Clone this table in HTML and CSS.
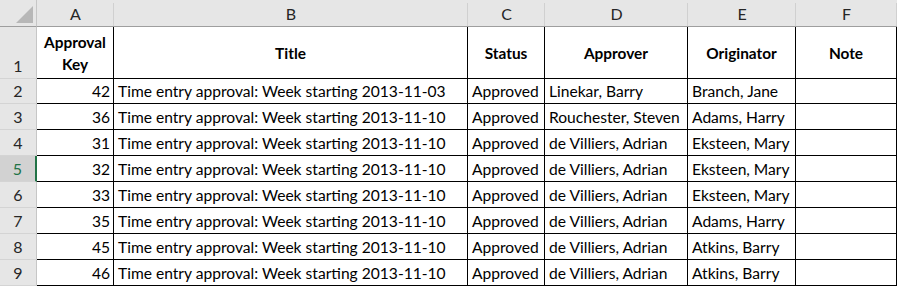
FILE: index.html
```html
<!DOCTYPE html>
<html>
<head>
<meta charset="utf-8">
<link rel="stylesheet" href="styles.css">
</head>
<body>
<div class="sheet">
  <div class="corner"><span class="tri"></span></div>
  <div class="colhead">A</div>
  <div class="colhead">B</div>
  <div class="colhead">C</div>
  <div class="colhead">D</div>
  <div class="colhead">E</div>
  <div class="colhead">F</div>

  <div class="rowhead">1</div>
  <div class="cell hdr">Approval<br>Key</div>
  <div class="cell hdr">Title</div>
  <div class="cell hdr">Status</div>
  <div class="cell hdr">Approver</div>
  <div class="cell hdr">Originator</div>
  <div class="cell hdr">Note</div>

  <div class="rowhead">2</div>
  <div class="cell num">42</div>
  <div class="cell">Time entry approval: Week starting 2013-11-03</div>
  <div class="cell">Approved</div>
  <div class="cell">Linekar, Barry</div>
  <div class="cell">Branch, Jane</div>
  <div class="cell"></div>

  <div class="rowhead">3</div>
  <div class="cell num">36</div>
  <div class="cell">Time entry approval: Week starting 2013-11-10</div>
  <div class="cell">Approved</div>
  <div class="cell">Rouchester, Steven</div>
  <div class="cell">Adams, Harry</div>
  <div class="cell"></div>

  <div class="rowhead">4</div>
  <div class="cell num">31</div>
  <div class="cell">Time entry approval: Week starting 2013-11-10</div>
  <div class="cell">Approved</div>
  <div class="cell">de Villiers, Adrian</div>
  <div class="cell">Eksteen, Mary</div>
  <div class="cell"></div>

  <div class="rowhead sel">5</div>
  <div class="cell num">32</div>
  <div class="cell">Time entry approval: Week starting 2013-11-10</div>
  <div class="cell">Approved</div>
  <div class="cell">de Villiers, Adrian</div>
  <div class="cell">Eksteen, Mary</div>
  <div class="cell"></div>

  <div class="rowhead">6</div>
  <div class="cell num">33</div>
  <div class="cell">Time entry approval: Week starting 2013-11-10</div>
  <div class="cell">Approved</div>
  <div class="cell">de Villiers, Adrian</div>
  <div class="cell">Eksteen, Mary</div>
  <div class="cell"></div>

  <div class="rowhead">7</div>
  <div class="cell num">35</div>
  <div class="cell">Time entry approval: Week starting 2013-11-10</div>
  <div class="cell">Approved</div>
  <div class="cell">de Villiers, Adrian</div>
  <div class="cell">Adams, Harry</div>
  <div class="cell"></div>

  <div class="rowhead">8</div>
  <div class="cell num">45</div>
  <div class="cell">Time entry approval: Week starting 2013-11-10</div>
  <div class="cell">Approved</div>
  <div class="cell">de Villiers, Adrian</div>
  <div class="cell">Atkins, Barry</div>
  <div class="cell"></div>

  <div class="rowhead">9</div>
  <div class="cell num">46</div>
  <div class="cell">Time entry approval: Week starting 2013-11-10</div>
  <div class="cell">Approved</div>
  <div class="cell">de Villiers, Adrian</div>
  <div class="cell">Atkins, Barry</div>
  <div class="cell"></div>
</div>
</body>
</html>
```
FILE: styles.css
```css
html, body {
  margin: 0;
  padding: 0;
  background: #ffffff;
}
.sheet {
  display: grid;
  grid-template-columns: 37px 77px 354px 77px 143px 108px 101px;
  grid-template-rows: 27px 52px 25px repeat(7, 26px);
  width: 897px;
  font-family: Lato, "Liberation Sans", sans-serif;
  font-size: 15.6px;
  color: #000;
}
.corner {
  background: #e6e6e6;
  border-right: 1px solid #c6c6c6;
  border-bottom: 1px solid #9e9e9e;
  position: relative;
}
.tri {
  position: absolute;
  right: 3px;
  bottom: 3px;
  width: 0;
  height: 0;
  border-left: 17px solid transparent;
  border-bottom: 17px solid #b7b7b7;
}
.colhead {
  background: #e6e6e6;
  border-bottom: 1px solid #9e9e9e;
  display: flex;
  align-items: center;
  justify-content: center;
  color: #262626;
  font-size: 16px;
  position: relative;
  padding-top: 1px;
}
.colhead::after {
  content: "";
  position: absolute;
  right: 0;
  top: 3px;
  bottom: 0;
  width: 1px;
  background: #d0d0d0;
}
.rowhead {
  background: #e6e6e6;
  border-right: 1px solid #c6c6c6;
  border-bottom: 1px solid #d4d4d4;
  display: flex;
  align-items: flex-end;
  justify-content: center;
  color: #262626;
  font-size: 16px;
  padding-bottom: 3px;
  line-height: 18px;
}
.rowhead.sel {
  background: #d2d2d2;
  color: #217346;
  border-right: 2px solid #217346;
}
.cell {
  border-right: 1px solid #000;
  border-bottom: 1px solid #000;
  display: flex;
  align-items: flex-end;
  padding: 0 3px 3px 4px;
  line-height: 18px;
  white-space: nowrap;
  overflow: hidden;
}
.cell.num {
  justify-content: flex-end;
  padding-right: 3px;
}
.cell.hdr {
  font-weight: bold;
  font-size: 15.4px;
  align-items: center;
  justify-content: center;
  text-align: center;
  line-height: 22px;
  padding: 0 2px;
}
```
